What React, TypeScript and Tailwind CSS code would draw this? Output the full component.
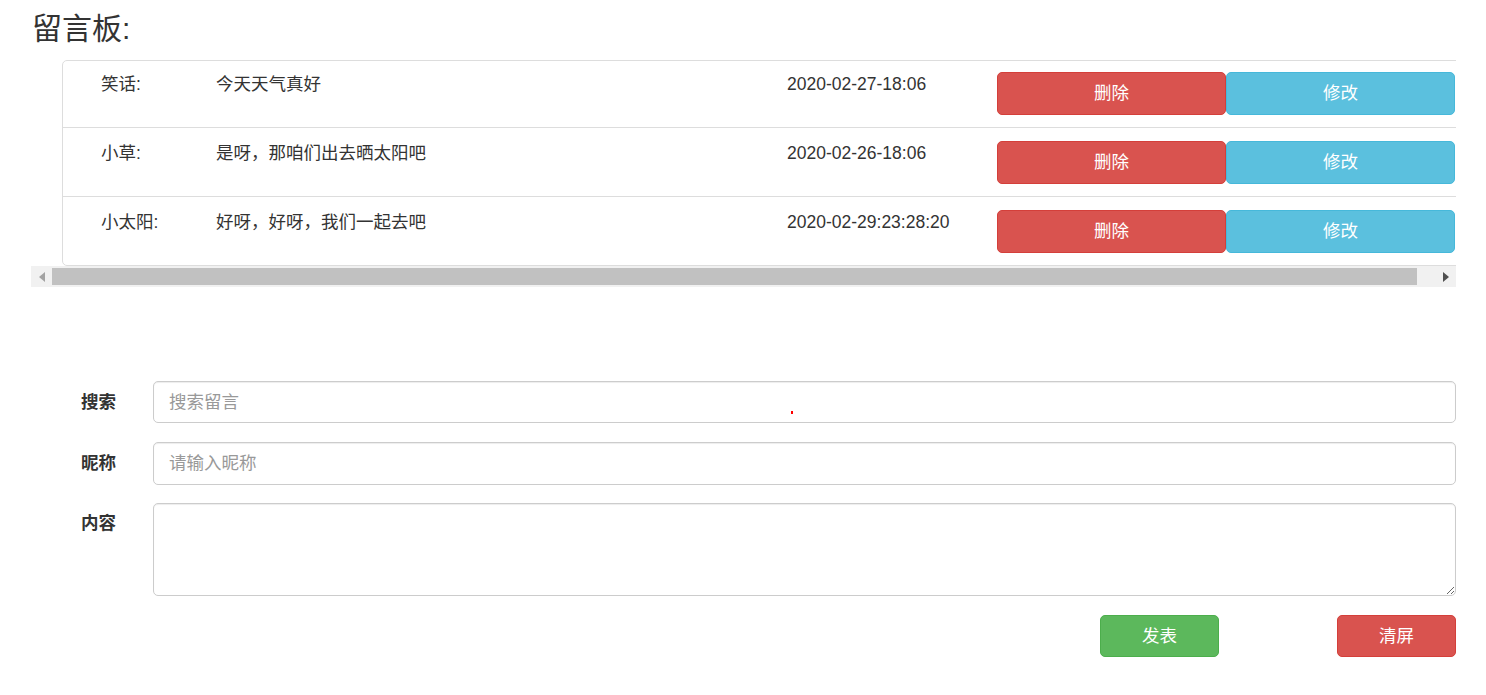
import React from "react";

const FONT = { fontFamily: '"Liberation Sans", "Noto Sans CJK SC", sans-serif' };

const rows = [
  { name: "笑话:", content: "今天天气真好", date: "2020-02-27-18:06" },
  { name: "小草:", content: "是呀，那咱们出去晒太阳吧", date: "2020-02-26-18:06" },
  { name: "小太阳:", content: "好呀，好呀，我们一起去吧", date: "2020-02-29:23:28:20" },
];

export default function App() {
  return (
    <div className="w-full bg-white text-[#333] pl-[31px] pr-[30px]" style={FONT}>
      <h3 className="pt-[12px] text-[30px] leading-[33px] font-normal pl-[1px]">留言板:</h3>

      <div className="mt-[15px] w-[1425px]">
        <div className="overflow-hidden w-[1425px]">
          <div className="ml-[31px] w-[1413px] border border-[#ddd] rounded-[5px] bg-white">
            {rows.map((r, i) => (
              <div
                key={i}
                className={`flex items-start pl-[38px] ${i === 0 ? "h-[66px] pt-[11px]" : "h-[69px] pt-[13px] border-t border-[#ddd]"}`}
              >
                <div className="w-[115px] text-[17.5px] leading-[25px] pt-[0px]">{r.name}</div>
                <div className="w-[571px] text-[17.5px] leading-[25px]">{r.content}</div>
                <div className="w-[210px] text-[17.5px] leading-[25px]">{r.date}</div>
                <button className="w-[229px] h-[43px] rounded-[5px] bg-[#d9534f] border border-[#d43f3a] text-white text-[17.5px] leading-[25px]">
                  删除
                </button>
                <button className="w-[229px] h-[43px] rounded-[5px] bg-[#5bc0de] border border-[#46b8da] text-white text-[17.5px] leading-[25px]">
                  修改
                </button>
              </div>
            ))}
          </div>
        </div>
        {/* horizontal scrollbar drawing */}
        <div className="flex h-[21px] bg-[#f1f1f1] mt-[0px]">
          <div className="w-[21px] flex items-center justify-center">
            <svg width="6" height="10" viewBox="0 0 6 10">
              <path d="M6 0 L0 5 L6 10 Z" fill="#a3a3a3" />
            </svg>
          </div>
          <div className="flex-1 flex items-center">
            <div className="h-[17px] w-[1365px] bg-[#c1c1c1]" />
          </div>
          <div className="w-[21px] flex items-center justify-center">
            <svg width="6" height="10" viewBox="0 0 6 10">
              <path d="M0 0 L6 5 L0 10 Z" fill="#505050" />
            </svg>
          </div>
        </div>
      </div>

      <form className="mt-[94px] ml-[50px]" onSubmit={(e) => e.preventDefault()}>
        <div className="flex items-center">
          <label className="w-[72px] text-[17.5px] leading-[25px] font-bold">搜索</label>
          <div className="relative flex-1">
            <input
              placeholder="搜索留言"
              className="w-full h-[42px] px-[15px] border border-[#ccc] rounded-[5px] text-[17.5px] shadow-[inset_0_1px_1px_rgba(0,0,0,0.075)] placeholder:text-[#999] outline-none"
              style={FONT}
            />
            <span className="absolute left-[638px] top-[30px] w-[2px] h-[3px] bg-[#ff0000]" />
          </div>
        </div>
        <div className="flex items-center mt-[19px]">
          <label className="w-[72px] text-[17.5px] leading-[25px] font-bold">昵称</label>
          <input
            placeholder="请输入昵称"
            className="flex-1 h-[43px] px-[15px] border border-[#ccc] rounded-[5px] text-[17.5px] shadow-[inset_0_1px_1px_rgba(0,0,0,0.075)] placeholder:text-[#999] outline-none"
            style={FONT}
          />
        </div>
        <div className="flex items-start mt-[18px]">
          <label className="w-[72px] text-[17.5px] leading-[25px] font-bold pt-[8px]">内容</label>
          <textarea
            className="flex-1 h-[93px] px-[15px] py-[8px] border border-[#ccc] rounded-[5px] text-[17.5px] shadow-[inset_0_1px_1px_rgba(0,0,0,0.075)] outline-none block"
            style={FONT}
          />
        </div>
        <div className="flex justify-end mt-[19px]">
          <button className="w-[119px] h-[42px] rounded-[5px] bg-[#5cb85c] border border-[#4cae4c] text-white text-[17.5px] leading-[25px]">
            发表
          </button>
          <button className="ml-[118px] w-[119px] h-[42px] rounded-[5px] bg-[#d9534f] border border-[#d43f3a] text-white text-[17.5px] leading-[25px]">
            清屏
          </button>
        </div>
      </form>
    </div>
  );
}
